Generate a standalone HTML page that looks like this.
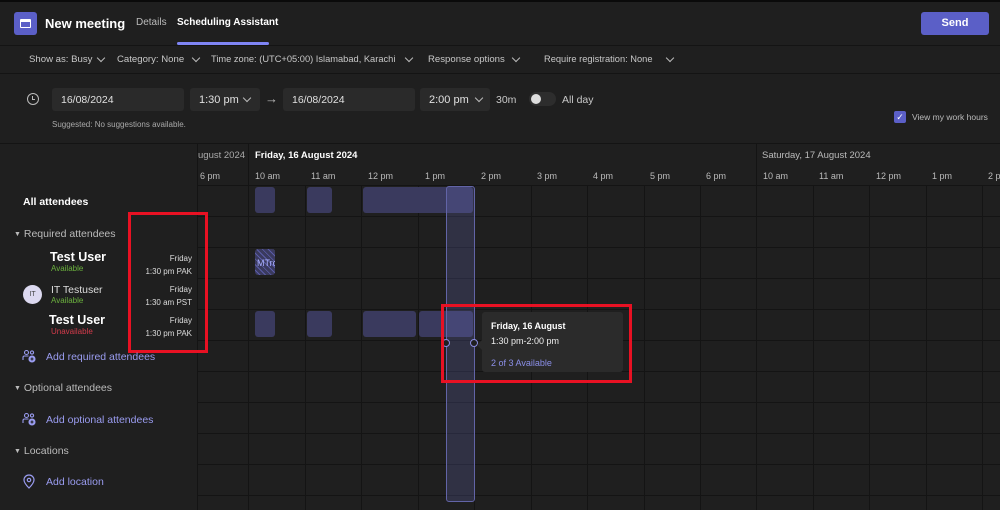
<!DOCTYPE html>
<html><head><style>
*{margin:0;padding:0;box-sizing:border-box}
body{width:1000px;height:510px;background:#1f1f1f;font-family:"Liberation Sans",sans-serif;color:#d6d6d6;position:relative;overflow:hidden;font-size:11px}
.a{position:absolute;white-space:nowrap}
.vl{position:absolute;top:185px;height:325px;width:1px;background:#141414}
.hl{position:absolute;left:198px;right:0;height:1px;background:#141414}
.blk{position:absolute;background:#3a3a5e;border-radius:3px;height:26px}
.inp{position:absolute;background:#2a2a2a;border-radius:3px;height:23px;font-size:10.5px;color:#e0e0e0;padding:6px 9px}
.chev{position:absolute;width:6px;height:6px;border-right:1px solid #bbb;border-bottom:1px solid #bbb;transform:rotate(45deg)}
.lbl{color:#c8c8c8;font-size:9.6px}
.red{position:absolute;border:3px solid #e81123}
</style></head><body>
<div class="a" style="left:0;top:0;width:1000px;height:2px;background:#0a0a0a"></div>
<!-- header -->
<div class="a" style="left:14px;top:12px;width:23px;height:23px;background:#5b5fc7;border-radius:3px"></div>
<div class="a" style="left:20px;top:19px;width:11px;height:9px;border:1.5px solid #fff;border-top-width:3px;border-radius:1px"></div>
<div class="a" style="left:45px;top:16px;font-size:13px;font-weight:bold;color:#fff">New meeting</div>
<div class="a" style="left:136px;top:17px;font-size:10px;color:#bbb">Details</div>
<div class="a" style="left:177px;top:17px;font-size:10px;font-weight:bold;color:#fff">Scheduling Assistant</div>
<div class="a" style="left:177px;top:42px;width:92px;height:3px;background:#7f85f5;border-radius:2px"></div>
<div class="a" style="left:921px;top:12px;width:68px;height:23px;background:#5b5fc7;border-radius:3px;color:#fff;font-weight:bold;font-size:11px;text-align:center;line-height:23px">Send</div>
<div class="a" style="left:0;top:45px;width:1000px;height:1px;background:#141414"></div>
<div class="a" style="left:0;top:73px;width:1000px;height:1px;background:#141414"></div>
<div class="a lbl" style="left:29px;top:54px">Show as: Busy</div><div class="chev" style="left:98px;top:55px"></div>
<div class="a lbl" style="left:117px;top:54px">Category: None</div><div class="chev" style="left:193px;top:55px"></div>
<div class="a lbl" style="left:211px;top:54px;font-size:9.3px">Time zone: (UTC+05:00) Islamabad, Karachi</div><div class="chev" style="left:406px;top:55px"></div>
<div class="a lbl" style="left:428px;top:54px">Response options</div><div class="chev" style="left:513px;top:55px"></div>
<div class="a lbl" style="left:544px;top:54px;font-size:9.3px">Require registration: None</div><div class="chev" style="left:667px;top:55px"></div>
<!-- date row -->
<div class="a" style="left:27px;top:93px;width:12px;height:12px;border:1.3px solid #bbb;border-radius:50%"></div>
<div class="a" style="left:32px;top:96px;width:3px;height:4px;border-left:1.2px solid #bbb;border-bottom:1.2px solid #bbb"></div>
<div class="inp" style="left:52px;top:88px;width:132px">16/08/2024</div>
<div class="inp" style="left:190px;top:88px;width:70px;font-size:11px">1:30 pm</div><div class="chev" style="left:244px;top:95px"></div>
<div class="a" style="left:265px;top:91px;font-size:13px;color:#bbb">→</div>
<div class="inp" style="left:283px;top:88px;width:132px">16/08/2024</div>
<div class="inp" style="left:420px;top:88px;width:70px;font-size:11px">2:00 pm</div><div class="chev" style="left:476px;top:95px"></div>
<div class="a lbl" style="left:496px;top:94px;font-size:10.5px">30m</div>
<div class="a" style="left:529px;top:92px;width:27px;height:14px;background:#2d2d2d;border-radius:7px"></div>
<div class="a" style="left:531px;top:94px;width:10px;height:10px;background:#ddd;border-radius:50%"></div>
<div class="a lbl" style="left:562px;top:94px;font-size:10.5px">All day</div>
<div class="a" style="left:52px;top:120px;font-size:8px;color:#aaa">Suggested: No suggestions available.</div>
<div class="a" style="left:894px;top:111px;width:12px;height:12px;background:#5b5fc7;border-radius:2px;color:#fff;font-size:9px;text-align:center;line-height:12px">✓</div>
<div class="a" style="left:912px;top:112px;font-size:8.5px;color:#bbb">View my work hours</div>
<div class="a" style="left:0;top:143px;width:1000px;height:1px;background:#141414"></div>
<!-- timeline header -->
<div class="a" style="left:197px;top:143px;width:1px;height:367px;background:#141414"></div>
<div class="a" style="left:756px;top:143px;width:1px;height:42px;background:#141414"></div>
<div class="a" style="left:248px;top:143px;width:1px;height:42px;background:#141414"></div>
<div class="a" style="left:198px;top:150px;font-size:9.5px;color:#aaa;width:50px;overflow:hidden">ugust 2024</div>
<div class="a" style="left:255px;top:150px;font-size:9.5px;font-weight:bold;color:#fff">Friday, 16 August 2024</div>
<div class="a" style="left:762px;top:150px;font-size:9.5px;color:#bbb">Saturday, 17 August 2024</div>
<div class="a" style="left:198px;top:185px;width:802px;height:1px;background:#141414"></div>
<div class="a" style="left:200px;top:171px;font-size:9px;color:#bbb">6 pm</div>
<div class="a" style="left:255px;top:171px;font-size:9px;color:#bbb">10 am</div>
<div class="a" style="left:311px;top:171px;font-size:9px;color:#bbb">11 am</div>
<div class="a" style="left:368px;top:171px;font-size:9px;color:#bbb">12 pm</div>
<div class="a" style="left:425px;top:171px;font-size:9px;color:#bbb">1 pm</div>
<div class="a" style="left:481px;top:171px;font-size:9px;color:#bbb">2 pm</div>
<div class="a" style="left:537px;top:171px;font-size:9px;color:#bbb">3 pm</div>
<div class="a" style="left:593px;top:171px;font-size:9px;color:#bbb">4 pm</div>
<div class="a" style="left:650px;top:171px;font-size:9px;color:#bbb">5 pm</div>
<div class="a" style="left:706px;top:171px;font-size:9px;color:#bbb">6 pm</div>
<div class="a" style="left:763px;top:171px;font-size:9px;color:#bbb">10 am</div>
<div class="a" style="left:819px;top:171px;font-size:9px;color:#bbb">11 am</div>
<div class="a" style="left:876px;top:171px;font-size:9px;color:#bbb">12 pm</div>
<div class="a" style="left:932px;top:171px;font-size:9px;color:#bbb">1 pm</div>
<div class="a" style="left:988px;top:171px;font-size:9px;color:#bbb">2 p</div>
<!-- grid -->
<div class="vl" style="left:248px"></div><div class="vl" style="left:305px"></div><div class="vl" style="left:361px"></div><div class="vl" style="left:418px"></div><div class="vl" style="left:474px"></div><div class="vl" style="left:531px"></div><div class="vl" style="left:587px"></div><div class="vl" style="left:644px"></div><div class="vl" style="left:700px"></div><div class="vl" style="left:756px"></div><div class="vl" style="left:813px"></div><div class="vl" style="left:869px"></div><div class="vl" style="left:926px"></div><div class="vl" style="left:982px"></div>
<div class="hl" style="top:216px"></div><div class="hl" style="top:247px"></div><div class="hl" style="top:278px"></div><div class="hl" style="top:309px"></div><div class="hl" style="top:340px"></div><div class="hl" style="top:371px"></div><div class="hl" style="top:402px"></div><div class="hl" style="top:433px"></div><div class="hl" style="top:464px"></div><div class="hl" style="top:495px"></div>
<!-- blocks -->
<div class="blk" style="left:255px;top:187px;width:20px"></div>
<div class="blk" style="left:307px;top:187px;width:25px"></div>
<div class="blk" style="left:363px;top:187px;width:110px"></div>
<div class="blk" style="left:255px;top:249px;width:20px;background:repeating-linear-gradient(45deg,#3a3a5e 0 3px,#5a5ca8 3px 4px);overflow:hidden;color:#aab0ff;font-size:9px;padding:9px 0 0 2px">MTro</div>
<div class="blk" style="left:255px;top:311px;width:20px"></div>
<div class="blk" style="left:307px;top:311px;width:25px"></div>
<div class="blk" style="left:363px;top:311px;width:53px"></div>
<div class="blk" style="left:419px;top:311px;width:54px"></div>
<div class="a" style="left:446px;top:186px;width:29px;height:316px;background:rgba(110,112,200,0.22);border:1px solid #6264a7;border-radius:3px"></div>
<div class="a" style="left:442px;top:339px;width:8px;height:8px;border:1px solid #8a8ce0;border-radius:50%;background:#1f1f1f"></div>
<div class="a" style="left:470px;top:339px;width:8px;height:8px;border:1px solid #8a8ce0;border-radius:50%;background:#1f1f1f"></div>
<!-- tooltip -->
<div class="a" style="left:482px;top:312px;width:141px;height:60px;background:#2b2b2b;border-radius:3px"></div>
<div class="a" style="left:477px;top:339px;width:0;height:0;border-top:6px solid transparent;border-bottom:6px solid transparent;border-right:6px solid #2b2b2b"></div>
<div class="a" style="left:491px;top:321px;font-size:9px;font-weight:bold;color:#fff">Friday, 16 August</div>
<div class="a" style="left:491px;top:336px;font-size:9px;color:#eee">1:30 pm-2:00 pm</div>
<div class="a" style="left:491px;top:358px;font-size:9px;color:#8b8fe8">2 of 3 Available</div>
<div class="red" style="left:441px;top:304px;width:191px;height:79px"></div>
<!-- left panel -->
<div class="a" style="left:23px;top:196px;font-size:10.5px;font-weight:bold;color:#fff">All attendees</div>
<div class="a" style="left:14px;top:228px;font-size:10.5px;color:#bbb"><span style="font-size:7px;position:relative;top:-1px">▼</span> Required attendees</div>
<div class="a" style="left:50px;top:250px;font-size:12.5px;font-weight:bold;color:#fff">Test User</div>
<div class="a" style="left:51px;top:264px;font-size:8px;color:#6bb13e">Available</div>
<div class="a" style="left:23px;top:285px;width:19px;height:19px;border-radius:50%;background:#dcd9f0;color:#444;font-size:7px;text-align:center;line-height:19px">IT</div>
<div class="a" style="left:51px;top:284px;font-size:10.5px;color:#ddd">IT Testuser</div>
<div class="a" style="left:51px;top:296px;font-size:8px;color:#6bb13e">Available</div>
<div class="a" style="left:49px;top:313px;font-size:12.5px;font-weight:bold;color:#fff">Test User</div>
<div class="a" style="left:51px;top:327px;font-size:8px;color:#d23b4b">Unavailable</div>
<div class="a" style="left:130px;top:252px;width:62px;text-align:right;font-size:8px;color:#ddd;line-height:13px">Friday<br>1:30 pm PAK</div>
<div class="a" style="left:130px;top:283px;width:62px;text-align:right;font-size:8px;color:#ddd;line-height:13px">Friday<br>1:30 am PST</div>
<div class="a" style="left:130px;top:314px;width:62px;text-align:right;font-size:8px;color:#ddd;line-height:13px">Friday<br>1:30 pm PAK</div>
<div class="red" style="left:128px;top:212px;width:80px;height:141px"></div>
<svg class="a" style="left:22px;top:349px" width="14" height="14" viewBox="0 0 14 14" fill="none" stroke="#9a9cf0" stroke-width="1.1"><circle cx="4.5" cy="3.5" r="2"/><circle cx="10" cy="3.5" r="1.6"/><path d="M1 11v-2.5a1.5 1.5 0 0 1 1.5-1.5h4"/><circle cx="10" cy="10" r="3" fill="#9a9cf0"/><path d="M10 8.5v3M8.5 10h3" stroke="#1f1f1f"/></svg>
<div class="a" style="left:46px;top:351px;font-size:10.5px;color:#9a9cf0">Add required attendees</div>
<div class="a" style="left:14px;top:382px;font-size:10.5px;color:#bbb"><span style="font-size:7px;position:relative;top:-1px">▼</span> Optional attendees</div>
<svg class="a" style="left:22px;top:412px" width="14" height="14" viewBox="0 0 14 14" fill="none" stroke="#9a9cf0" stroke-width="1.1"><circle cx="4.5" cy="3.5" r="2"/><circle cx="10" cy="3.5" r="1.6"/><path d="M1 11v-2.5a1.5 1.5 0 0 1 1.5-1.5h4"/><circle cx="10" cy="10" r="3" fill="#9a9cf0"/><path d="M10 8.5v3M8.5 10h3" stroke="#1f1f1f"/></svg>
<div class="a" style="left:46px;top:414px;font-size:10.5px;color:#9a9cf0">Add optional attendees</div>
<div class="a" style="left:14px;top:445px;font-size:10.5px;color:#bbb"><span style="font-size:7px;position:relative;top:-1px">▼</span> Locations</div>
<svg class="a" style="left:23px;top:474px" width="12" height="15" viewBox="0 0 12 15" fill="none" stroke="#9a9cf0" stroke-width="1.2"><path d="M6 14C2 10 1 8 1 6a5 5 0 0 1 10 0c0 2-1 4-5 8z"/><circle cx="6" cy="6" r="1.7"/></svg>
<div class="a" style="left:46px;top:476px;font-size:10.5px;color:#9a9cf0">Add location</div>
</body></html>
